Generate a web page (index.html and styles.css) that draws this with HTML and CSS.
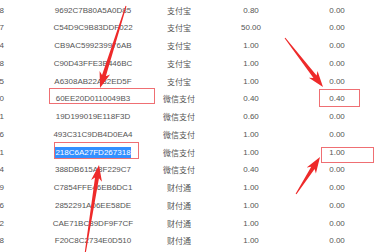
FILE: index.html
```html
<!DOCTYPE html>
<html>
<head>
<meta charset="utf-8">
<link rel="stylesheet" href="styles.css">
</head>
<body>
<div class="page">
  <div class="table">
    <div class="row"><span class="idx">8</span><span class="id">9692C7B80A5A0D85</span><span class="type">支付宝</span><span class="amt">0.80</span><span class="bal">0.00</span></div>
    <div class="row"><span class="idx">7</span><span class="id">C54D9C9B83DDF022</span><span class="type">支付宝</span><span class="amt">50.00</span><span class="bal">0.00</span></div>
    <div class="row"><span class="idx">4</span><span class="id">CB9AC599239976AB</span><span class="type">支付宝</span><span class="amt">1.00</span><span class="bal">0.00</span></div>
    <div class="row"><span class="idx">8</span><span class="id">C90D43FFE3B446BC</span><span class="type">支付宝</span><span class="amt">1.00</span><span class="bal">0.00</span></div>
    <div class="row"><span class="idx">5</span><span class="id">A6308AB22A82ED5F</span><span class="type">支付宝</span><span class="amt">1.00</span><span class="bal">0.00</span></div>
    <div class="row"><span class="idx">0</span><span class="id">60EE20D0110049B3</span><span class="type">微信支付</span><span class="amt">0.40</span><span class="bal">0.40</span></div>
    <div class="row"><span class="idx">1</span><span class="id">19D199019E118F3D</span><span class="type">微信支付</span><span class="amt">0.60</span><span class="bal">0.00</span></div>
    <div class="row"><span class="idx">6</span><span class="id">493C31C9DB4D0EA4</span><span class="type">微信支付</span><span class="amt">1.00</span><span class="bal">0.00</span></div>
    <div class="row"><span class="idx">1</span><span class="id"><span class="sel">218C6A27FD267318</span></span><span class="type">微信支付</span><span class="amt">1.00</span><span class="bal">1.00</span></div>
    <div class="row"><span class="idx">4</span><span class="id">388DB615A8F229C7</span><span class="type">微信支付</span><span class="amt">0.40</span><span class="bal">0.00</span></div>
    <div class="row"><span class="idx">9</span><span class="id">C7854FFE46EB6DC1</span><span class="type">财付通</span><span class="amt">1.00</span><span class="bal">0.00</span></div>
    <div class="row"><span class="idx">6</span><span class="id">2852291A06EE58DE</span><span class="type">财付通</span><span class="amt">1.00</span><span class="bal">0.00</span></div>
    <div class="row"><span class="idx">2</span><span class="id">CAE71BC89DF9F7CF</span><span class="type">财付通</span><span class="amt">1.00</span><span class="bal">0.00</span></div>
    <div class="row"><span class="idx">8</span><span class="id">F20C8C2734E0D510</span><span class="type">财付通</span><span class="amt">1.00</span><span class="bal">0.00</span></div>
  </div>
  <svg class="marks" width="392" height="252" viewBox="0 0 392 252">
    <g class="box">
      <rect x="49.5" y="88.5" width="105" height="15"/>
      <rect x="54.5" y="142.5" width="84" height="16"/>
      <rect x="319.5" y="89.5" width="40" height="17"/>
      <rect x="321.5" y="147.5" width="52" height="15"/>
    </g>
    <g class="arrow">
      <g transform="translate(100 88) rotate(107.6)"><polygon points="0,0 -16,5.5 -13,2 -86,0.5 -86,-0.5 -13,-2 -16,-5.5"/></g>
      <g transform="translate(323 87) rotate(52.2)"><polygon points="0,0 -16,5.5 -13,2 -62,0.5 -62,-0.5 -13,-2 -16,-5.5"/></g>
      <g transform="translate(320 157) rotate(-57)"><polygon points="0,0 -16,5.5 -13,2 -44,0.5 -44,-0.5 -13,-2 -16,-5.5"/></g>
      <g transform="translate(99 165) rotate(-81.1)"><polygon points="0,0 -16,5.5 -13,2 -91,0.5 -91,-0.5 -13,-2 -16,-5.5"/></g>
    </g>
  </svg>
</div>
</body>
</html>
```

FILE: styles.css
```css
html, body {
  margin: 0;
  padding: 0;
  background: #fff;
  overflow: hidden;
}
.page {
  position: relative;
  width: 392px;
  height: 252px;
  overflow: hidden;
}
.table {
  margin-left: -20px;
  padding-top: 1.2px;
  font-family: "Liberation Sans", "Noto Sans CJK SC", sans-serif;
  font-size: 8px;
  color: #555;
}
.row {
  display: grid;
  grid-template-columns: 60px 106px 66px 78px 94px;
  height: 17.75px;
  align-items: center;
  white-space: nowrap;
}
.idx {
  text-align: right;
  padding-right: 36px;
}
.id, .type, .amt, .bal {
  text-align: center;
}
.sel {
  background: #3390ff;
  color: #fff;
  padding: 1px 0;
}
.marks {
  position: absolute;
  left: 0;
  top: 0;
}
.box rect {
  fill: none;
  stroke: #ef6f73;
  stroke-width: 1;
}
.arrow polygon {
  fill: #ee2a2a;
}
```
